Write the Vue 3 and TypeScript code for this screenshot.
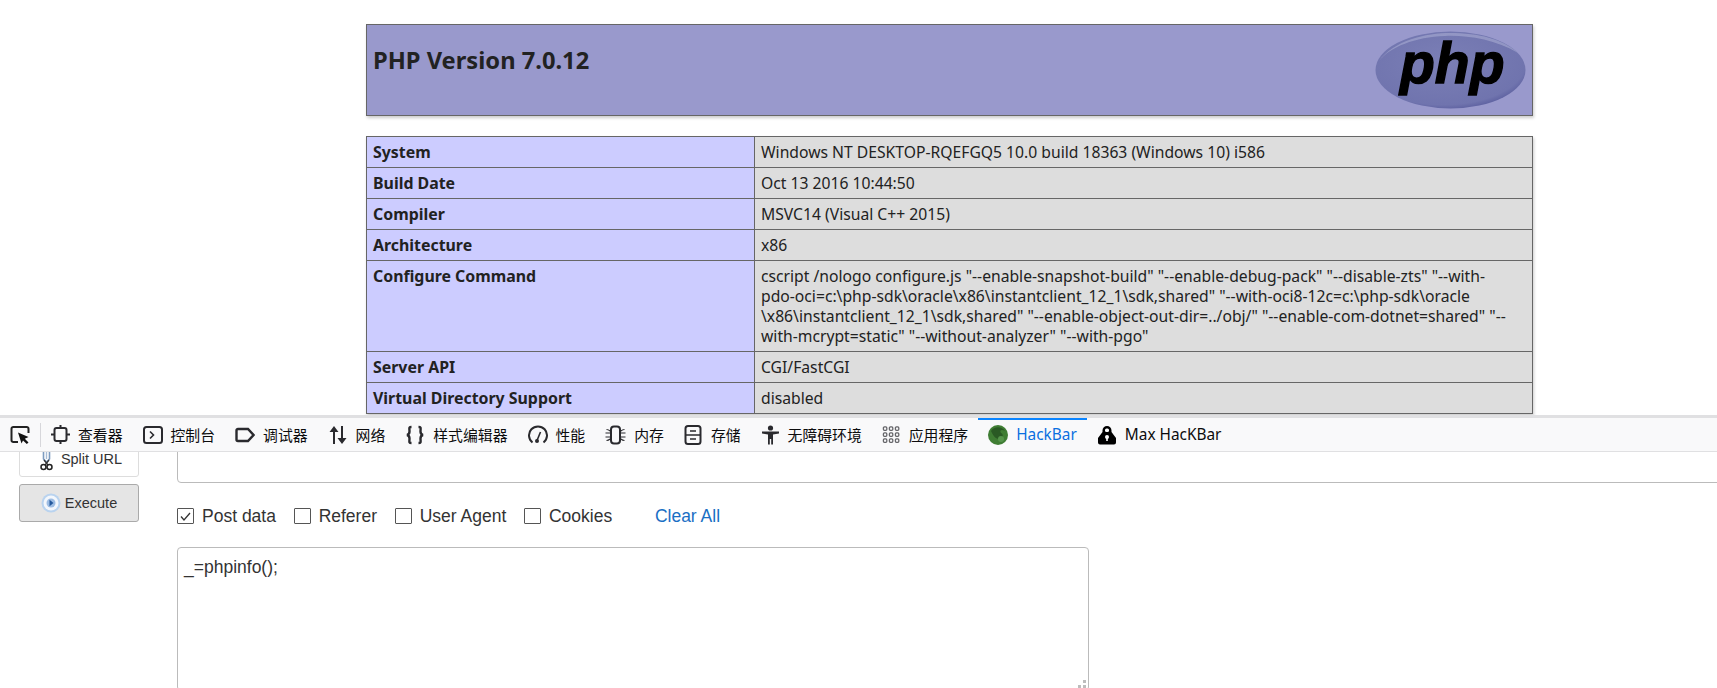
<script setup lang="ts">
interface Row { k: string; v: string }
const rows: Row[] = [
  { k: 'System', v: 'Windows NT DESKTOP-RQEFGQ5 10.0 build 18363 (Windows 10) i586' },
  { k: 'Build Date', v: 'Oct 13 2016 10:44:50' },
  { k: 'Compiler', v: 'MSVC14 (Visual C++ 2015)' },
  { k: 'Architecture', v: 'x86' },
  { k: 'Configure Command', v: 'cscript /nologo configure.js "--enable-snapshot-build" "--enable-debug-pack" "--disable-zts" "--with-\npdo-oci=c:\\php-sdk\\oracle\\x86\\instantclient_12_1\\sdk,shared" "--with-oci8-12c=c:\\php-sdk\\oracle\n\\x86\\instantclient_12_1\\sdk,shared" "--enable-object-out-dir=../obj/" "--enable-com-dotnet=shared" "--\nwith-mcrypt=static" "--without-analyzer" "--with-pgo"' },
  { k: 'Server API', v: 'CGI/FastCGI' },
  { k: 'Virtual Directory Support', v: 'disabled' },
]
interface Tab { id: string; label: string; latin?: boolean }
const tabs: Tab[] = [
  { id: 'inspector', label: '查看器' },
  { id: 'console', label: '控制台' },
  { id: 'debugger', label: '调试器' },
  { id: 'network', label: '网络' },
  { id: 'style', label: '样式编辑器' },
  { id: 'perf', label: '性能' },
  { id: 'memory', label: '内存' },
  { id: 'storage', label: '存储' },
  { id: 'a11y', label: '无障碍环境' },
  { id: 'apps', label: '应用程序' },
  { id: 'hackbar', label: 'HackBar', latin: true },
  { id: 'max', label: 'Max HacKBar', latin: true },
]
const checks = [
  { label: 'Post data', on: true },
  { label: 'Referer', on: false },
  { label: 'User Agent', on: false },
  { label: 'Cookies', on: false },
]
const dots = [3, 9, 15].flatMap((y) => [3, 9, 15].map((x) => ({ x, y })))
</script>

<template>
  <div class="root">
    <section class="php">
      <header class="php-head">
        <h1>PHP Version 7.0.12</h1>
        <svg class="logo" width="151" height="78" viewBox="0 0 151 78">
          <defs>
            <radialGradient id="lg" cx="0.45" cy="0.4" r="0.65">
              <stop offset="0" stop-color="#7b7fb6" />
              <stop offset="0.85" stop-color="#7074ae" />
              <stop offset="1" stop-color="#55589a" />
            </radialGradient>
          </defs>
          <ellipse cx="75.5" cy="39" rx="75" ry="38.5" fill="url(#lg)" />
          <path d="M4 30 C20 8 55 1 80 2 C110 3 130 10 143 22 C120 8 90 4 70 5 C40 6 15 16 4 30Z" fill="#a9abd2" opacity="0.6" />
          <text x="25" y="52" class="logo-text">php</text>
        </svg>
      </header>
      <table class="info">
        <tbody>
          <tr v-for="r in rows" :key="r.k">
            <td class="e">{{ r.k }}</td>
            <td class="v">{{ r.v }}</td>
          </tr>
        </tbody>
      </table>
    </section>

    <nav class="toolbar">
      <div class="picker">
        <svg width="20" height="20" viewBox="0 0 20 20" fill="none">
          <path d="M8 17H3.500A1.800 1.800 0 0 1 1.500 15V4A1.800 1.800 0 0 1 3.500 2H16.500A1.800 1.800 0 0 1 18.500 4V8" stroke="#222" stroke-width="2" />
          <path d="M8 7.500 L18.500 12 L14.800 13.800 L18.500 17.500 L16.800 19 L13 15.500 L11.500 18.500Z" fill="#111" />
        </svg>
      </div>
      <div v-for="t in tabs" :key="t.id" class="tab" :class="{ active: t.id === 'hackbar', latin: t.latin }">
        <span class="ico">
          <svg v-if="t.id === 'inspector'" width="19" height="19" viewBox="0 0 19 19" fill="none" stroke="#2a2a2e" stroke-width="2">
            <rect x="3.500" y="3" width="12" height="13" rx="2" />
            <path d="M9.500 0V3M9.500 16V19M0 9.500H3.500M15.500 9.500H19" />
          </svg>
          <svg v-else-if="t.id === 'console'" width="20" height="20" viewBox="0 0 20 20" fill="none" stroke="#2a2a2e" stroke-width="2">
            <rect x="1" y="2" width="18" height="16" rx="2.500" />
            <path d="M7 6.500L10.500 10L7 13.500" stroke-width="1.600" />
          </svg>
          <svg v-else-if="t.id === 'debugger'" width="20" height="20" viewBox="0 0 20 20" fill="none" stroke="#2a2a2e" stroke-width="2.400">
            <path d="M3 4H13L18.500 10L13 16H3A1.500 1.500 0 0 1 1.500 14.500V5.500A1.500 1.500 0 0 1 3 4Z" />
          </svg>
          <svg v-else-if="t.id === 'network'" width="20" height="20" viewBox="0 0 20 20" fill="#2a2a2e">
            <path d="M5 19V7H1.500L6 1L10.500 7H7V19Z" />
            <path d="M13 1V13H9.500L14 19L18.500 13H15V1Z" />
          </svg>
          <svg v-else-if="t.id === 'style'" width="20" height="20" viewBox="0 0 20 20" fill="none" stroke="#2a2a2e" stroke-width="2.400">
            <path d="M6.500 2C3.500 2 4.500 3.500 4.500 6.500C4.500 8.500 4 9.500 2 10C4 10.500 4.500 11.500 4.500 13.500C4.500 16.500 3.500 18 6.500 18" />
            <path d="M13.500 2C16.500 2 15.500 3.500 15.500 6.500C15.500 8.500 16 9.500 18 10C16 10.500 15.500 11.500 15.500 13.500C15.500 16.500 16.500 18 13.500 18" />
          </svg>
          <svg v-else-if="t.id === 'perf'" width="20" height="20" viewBox="0 0 20 20" fill="none" stroke="#2a2a2e" stroke-width="2">
            <path d="M4.500 17.500A9 9 0 1 1 15.500 17.500" />
            <path d="M9 15.500L12.500 7" stroke-width="1.600" />
            <circle cx="9" cy="16" r="2" fill="#2a2a2e" stroke="none" />
          </svg>
          <svg v-else-if="t.id === 'memory'" width="21" height="20" viewBox="0 0 21 20" fill="none" stroke="#2a2a2e" stroke-width="2">
            <rect x="6" y="1.500" width="9" height="17" rx="3" />
            <path d="M1.500 4.500C3 4.500 4 5 5 6M0.500 8H5M0.500 12H5M1.500 15.500C3 15.500 4 15 5 14M19.500 4.500C18 4.500 17 5 16 6M20.500 8H16M20.500 12H16M19.500 15.500C18 15.500 17 15 16 14" stroke-width="1.200" />
          </svg>
          <svg v-else-if="t.id === 'storage'" width="18" height="20" viewBox="0 0 18 20" fill="none" stroke="#2a2a2e" stroke-width="2">
            <rect x="1.500" y="1" width="15" height="18" rx="2.500" />
            <path d="M6 6H12M1.500 10H16.500M6 14H12" stroke-width="1.500" />
          </svg>
          <svg v-else-if="t.id === 'a11y'" width="19" height="20" viewBox="0 0 19 20" fill="#2a2a2e">
            <circle cx="9.500" cy="3" r="2.600" />
            <path d="M1 6.500H18V8.500L12 9.500V19.500H10.200V14H8.800V19.500H7V9.500L1 8.500Z" />
          </svg>
          <svg v-else-if="t.id === 'apps'" width="19" height="19" viewBox="0 0 19 19" fill="none" stroke="#66666a" stroke-width="1.300">
            <rect v-for="(d, i) in dots" :key="i" :x="d.x - 1.600" :y="d.y - 1.100" width="3.400" height="3.400" rx="1" />
          </svg>
          <svg v-else-if="t.id === 'hackbar'" width="20" height="20" viewBox="0 0 20 20">
            <circle cx="10" cy="10" r="10" fill="#3f7d33" />
            <path d="M3 6C6 1 14 1 17 6C14 4 11 5 13 8C16 9 15 14 11 14C7 14 5 10 3 6Z" fill="#2a5a24" />
            <circle cx="13" cy="14" r="3" fill="#55944a" />
          </svg>
          <svg v-else width="20" height="20" viewBox="0 0 20 20">
            <path d="M10 1A4.500 4.500 0 0 1 14.500 5.500V7L19 13V17.500A2 2 0 0 1 17 19.500H3A2 2 0 0 1 1 17.500V13L5.500 7V5.500A4.500 4.500 0 0 1 10 1Z" fill="#000" />
            <rect x="8" y="3.500" width="4" height="3.500" rx="1.500" fill="#fff" />
            <circle cx="10" cy="12" r="2" fill="#fff" />
            <rect x="9.200" y="12" width="1.600" height="4" fill="#fff" />
          </svg>
        </span>
        <span class="lbl">{{ t.label }}</span>
      </div>
    </nav>

    <section class="hackbar">
      <div class="side">
        <button class="btn split" type="button">
          <svg width="13" height="26" viewBox="0 0 13 26" fill="none">
            <path d="M3.500 1V14L6.500 17L9.500 14V1" stroke="#7d9cc0" stroke-width="1.600" />
            <path d="M6.500 2V14" stroke="#a8bdd6" stroke-width="1.400" />
            <path d="M4 15L8 20M9 15L5 20" stroke="#333" stroke-width="1.300" />
            <circle cx="3.500" cy="22" r="2.500" stroke="#222" stroke-width="1.500" />
            <circle cx="9.500" cy="22" r="2.500" stroke="#222" stroke-width="1.500" />
          </svg>
          <span class="btn-text">Split URL</span>
        </button>
        <button class="btn exec" type="button">
          <svg width="20" height="20" viewBox="0 0 20 20">
            <circle cx="10" cy="10" r="9.500" fill="#b9d3ef" />
            <circle cx="10" cy="10" r="7.500" fill="#f3f7fc" />
            <circle cx="10" cy="10" r="4.500" fill="#9dbde4" />
            <path d="M8.500 6.800L12.500 10L8.500 13.200Z" fill="#23589c" />
          </svg>
          <span class="btn-text">Execute</span>
        </button>
      </div>
      <div class="main">
        <div class="url-box"></div>
        <div class="opts">
          <label v-for="c in checks" :key="c.label" class="opt">
            <span class="box">
              <svg v-if="c.on" width="13" height="13" viewBox="0 0 13 13" fill="none">
                <path d="M2 6.500L5 10L11 3" stroke="#333" stroke-width="1.300" />
              </svg>
            </span>
            <span>{{ c.label }}</span>
          </label>
          <a class="clear">Clear All</a>
        </div>
        <div class="post">
          _=phpinfo();
          <svg class="grip" width="8" height="8" viewBox="0 0 8 8" fill="#bdbdbd">
            <rect x="5" y="0" width="3" height="3" />
            <rect x="0" y="5" width="3" height="3" />
            <rect x="5" y="5" width="3" height="3" />
          </svg>
        </div>
      </div>
    </section>
  </div>
</template>

<style>
html, body { margin: 0; padding: 0; overflow: hidden; background: #fff; }
</style>

<style scoped>
.root {
  width: 1717px;
  height: 688px;
  overflow: hidden;
  display: flex;
  flex-direction: column;
  background: #fff;
}
.php {
  height: 415px;
  flex: none;
  overflow: hidden;
  box-sizing: border-box;
  padding: 24px 0 0 366px;
  font-family: "Noto Sans", sans-serif;
  color: #222;
}
.php-head {
  box-sizing: border-box;
  width: 1167px;
  height: 92px;
  background: #99c;
  border: 1px solid #666;
  box-shadow: 1px 2px 3px #ccc;
  display: flex;
  justify-content: space-between;
  padding: 6px 6px 0 6px;
}
.php-head h1 {
  margin: 13px 0 0;
  font-size: 23.700px;
  line-height: 32px;
  font-weight: 700;
  color: #222;
}
.logo-text {
  font-family: "Liberation Sans", sans-serif;
  font-style: italic;
  font-weight: 700;
  font-size: 57px;
  fill: #000;
  stroke: #000;
  stroke-width: 1.400px;
}
.info {
  margin-top: 20px;
  width: 1167px;
  border-collapse: collapse;
  table-layout: fixed;
  box-shadow: 1px 2px 3px #ccc;
  font-size: 15.700px;
  line-height: 20px;
}
.info td {
  border: 1px solid #666;
  padding: 5px 6px;
  vertical-align: top;
}
.e {
  width: 375px;
  background: #ccf;
  font-weight: 700;
  font-size: 15.900px;
}
.v {
  background: #ddd;
  white-space: pre-line;
}
.toolbar {
  flex: none;
  height: 37px;
  box-sizing: border-box;
  border-top: 3px solid #e0e0e2;
  border-bottom: 1px solid #e0e0e2;
  background: #f9f9fa;
  display: flex;
  align-items: stretch;
  font-family: "Noto Sans", "Noto Sans CJK SC", sans-serif;
  font-size: 14.850px;
  color: #0c0c0d;
}
.picker {
  width: 41px;
  box-sizing: border-box;
  padding-left: 10px;
  display: flex;
  align-items: center;
  background: linear-gradient(#d7d7db, #d7d7db) no-repeat 40px 50% / 1px 24px;
}
.tab {
  display: flex;
  align-items: center;
  gap: 8px;
  padding: 0 10px;
  box-sizing: border-box;
  white-space: nowrap;
}
.tab.latin { font-size: 15.400px; }
.tab.active {
  box-shadow: inset 0 2px 0 #0a84ff;
  color: #0a6fe0;
}
.ico { display: flex; align-items: center; justify-content: center; min-width: 19px; }
.lbl { line-height: 20px; }
.hackbar {
  flex: 1;
  min-height: 0;
  overflow: hidden;
  display: flex;
  gap: 38px;
  padding-left: 19px;
  font-family: "Liberation Sans", sans-serif;
  color: #333;
}
.side {
  flex: none;
  width: 120px;
  margin-top: -13px;
  display: flex;
  flex-direction: column;
  gap: 7px;
}
.btn {
  height: 38px;
  width: 120px;
  box-sizing: border-box;
  border: 1px solid #ddd;
  border-radius: 3px;
  background: #fff;
  display: flex;
  align-items: center;
  justify-content: center;
  gap: 8px;
  padding: 0;
  font: 14.500px "Liberation Sans", sans-serif;
  color: #333;
}
.btn-text { line-height: 12px; }
.split { padding-left: 4px; }
.split .btn-text { margin-top: 1px; }
.exec {
  background: #e5e5e5;
  border-color: #aaa;
  gap: 4px;
}
.main { flex: none; flex-grow: 1; margin-top: -13px; min-width: 0; }
.url-box {
  box-sizing: border-box;
  height: 44px;
  margin-right: -20px;
  border: 1px solid #bbb;
  border-radius: 4px;
  background: #fff;
}
.opts {
  display: flex;
  align-items: center;
  margin-top: 25px;
  height: 16px;
  font-size: 17.500px;
}
.opt {
  display: flex;
  align-items: center;
  gap: 8px;
  margin-right: 17.700px;
}
.box {
  box-sizing: border-box;
  width: 17px;
  height: 16px;
  border: 1px solid #555;
  border-radius: 1px;
  background: #fff;
  display: flex;
  align-items: center;
  justify-content: center;
}
.clear {
  margin-left: 25px;
  color: #1a6fc4;
}
.post {
  position: relative;
  box-sizing: border-box;
  margin-top: 23px;
  width: 912px;
  height: 144px;
  border: 1px solid #bbb;
  border-radius: 4px;
  padding: 9px 6px;
  font-size: 17.500px;
  line-height: 20px;
}
.grip { position: absolute; right: 2px; bottom: 2px; }
</style>
